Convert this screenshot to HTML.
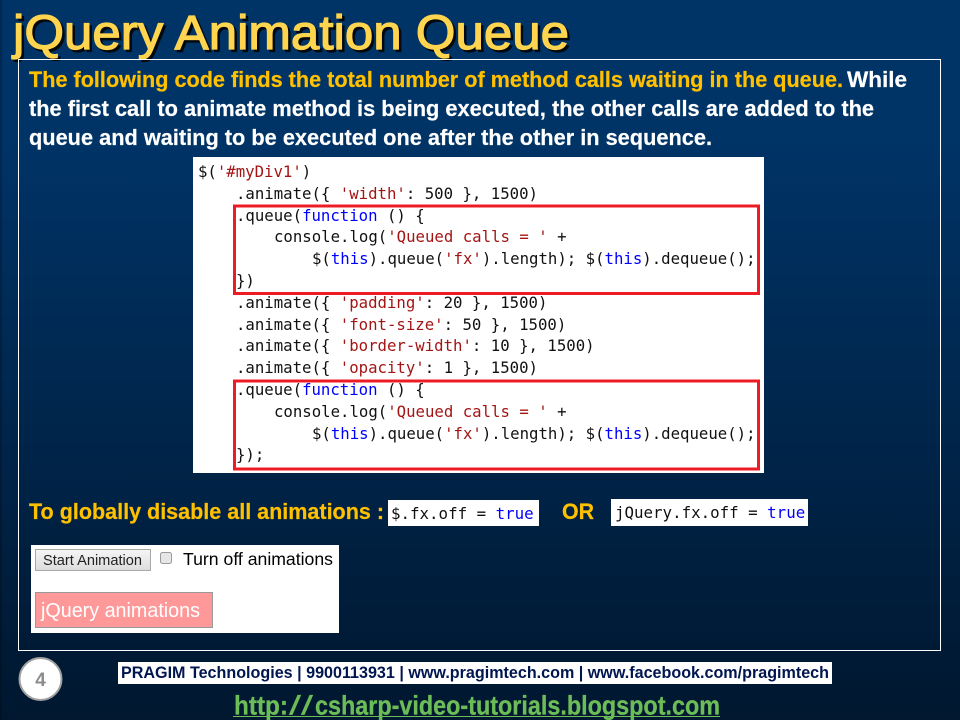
<!DOCTYPE html>
<html>
<head>
<meta charset="utf-8">
<title>jQuery Animation Queue</title>
<style>
html,body{margin:0;padding:0;background:#001a38;}
body{width:960px;height:720px;overflow:hidden;}
svg{display:block;}
.m{font-family:"DejaVu Sans Mono",monospace;font-size:15.68px;fill:#111;}
.m2{font-family:"DejaVu Sans Mono",monospace;font-size:15.8px;fill:#111;}
.s{fill:#a31515;}
.k{fill:#0000ff;}
.b{font-family:"Liberation Sans",sans-serif;font-weight:bold;font-size:22px;fill:#fff;stroke:#fff;stroke-width:.2px;}
.y{fill:#ffc000;stroke:#ffc000;}
</style>
</head>
<body>
<svg xmlns="http://www.w3.org/2000/svg" width="960" height="720" viewBox="0 0 960 720" xml:space="preserve">
<defs>
<linearGradient id="bg" x1="0" y1="0" x2="0" y2="1">
<stop offset="0" stop-color="#003366"/>
<stop offset="0.2" stop-color="#003366"/>
<stop offset="1" stop-color="#00172f"/>
</linearGradient>
<linearGradient id="btn" x1="0" y1="0" x2="0" y2="1">
<stop offset="0" stop-color="#f6f6f6"/>
<stop offset="1" stop-color="#dcdcdc"/>
</linearGradient>
</defs>
<rect width="960" height="720" fill="url(#bg)"/>
<rect x="0" y="0" width="2" height="720" fill="#000" opacity="0.2"/>

<text x="15.5" y="51.5" font-family="Liberation Sans,sans-serif" font-size="48" fill="#050505" stroke="#050505" stroke-width="1.2" opacity="0.9" textLength="556" lengthAdjust="spacingAndGlyphs">jQuery Animation Queue</text>
<text x="13" y="49" font-family="Liberation Sans,sans-serif" font-size="48" fill="#ffd54f" stroke="#ffd54f" stroke-width="1.2" textLength="556" lengthAdjust="spacingAndGlyphs">jQuery Animation Queue</text>

<rect x="18.5" y="59.5" width="922" height="591" fill="none" stroke="#fff" stroke-width="1"/>

<text class="b y" x="29" y="87" textLength="814" lengthAdjust="spacingAndGlyphs">The following code finds the total number of method calls waiting in the queue.</text>
<text class="b" x="847" y="87" textLength="60" lengthAdjust="spacingAndGlyphs">While</text>
<text class="b" x="29" y="116" textLength="845" lengthAdjust="spacingAndGlyphs">the first call to animate method is being executed, the other calls are added to the</text>
<text class="b" x="29" y="145" textLength="683" lengthAdjust="spacingAndGlyphs">queue and waiting to be executed one after the other in sequence.</text>

<rect x="193" y="157" width="571" height="316" fill="#fff"/>
<text class="m" x="198" y="177">$(<tspan class="s">'#myDiv1'</tspan>)</text>
<text class="m" x="236" y="199">.animate({ <tspan class="s">'width'</tspan>: 500 }, 1500)</text>
<text class="m" x="236" y="221">.queue(<tspan class="k">function</tspan> () {</text>
<text class="m" x="274" y="242">console.log(<tspan class="s">'Queued calls = '</tspan> +</text>
<text class="m" x="312" y="264">$(<tspan class="k">this</tspan>).queue(<tspan class="s">'fx'</tspan>).length); $(<tspan class="k">this</tspan>).dequeue();</text>
<text class="m" x="236" y="286">})</text>
<text class="m" x="236" y="308">.animate({ <tspan class="s">'padding'</tspan>: 20 }, 1500)</text>
<text class="m" x="236" y="330">.animate({ <tspan class="s">'font-size'</tspan>: 50 }, 1500)</text>
<text class="m" x="236" y="351">.animate({ <tspan class="s">'border-width'</tspan>: 10 }, 1500)</text>
<text class="m" x="236" y="373">.animate({ <tspan class="s">'opacity'</tspan>: 1 }, 1500)</text>
<text class="m" x="236" y="395">.queue(<tspan class="k">function</tspan> () {</text>
<text class="m" x="274" y="417">console.log(<tspan class="s">'Queued calls = '</tspan> +</text>
<text class="m" x="312" y="439">$(<tspan class="k">this</tspan>).queue(<tspan class="s">'fx'</tspan>).length); $(<tspan class="k">this</tspan>).dequeue();</text>
<text class="m" x="236" y="460">});</text>

<rect x="234.5" y="206" width="524" height="87.5" fill="none" stroke="#ed1c24" stroke-width="3"/>
<rect x="234.5" y="381" width="524" height="88" fill="none" stroke="#ed1c24" stroke-width="3"/>

<text class="b y" x="29" y="519" textLength="355" lengthAdjust="spacingAndGlyphs">To globally disable all animations :</text>
<rect x="388" y="500" width="151" height="26" fill="#fff"/>
<text class="m2" x="391" y="519">$.fx.off = <tspan class="k">true</tspan></text>
<text class="b y" x="562" y="519" textLength="32" lengthAdjust="spacingAndGlyphs">OR</text>
<rect x="611" y="499" width="197" height="27" fill="#fff"/>
<text class="m2" x="615" y="518">jQuery.fx.off = <tspan class="k">true</tspan></text>

<rect x="31" y="545" width="308" height="88" fill="#fff"/>
<rect x="35.5" y="549.5" width="115" height="21" fill="url(#btn)" stroke="#a8a8a8" stroke-width="1"/>
<text x="43" y="565" font-family="Liberation Sans,sans-serif" font-size="14.5" fill="#222" textLength="99" lengthAdjust="spacingAndGlyphs">Start Animation</text>
<rect x="160.5" y="552.5" width="11" height="11" rx="2" fill="#e6e6e6" stroke="#9a9a9a" stroke-width="1"/>
<text x="183" y="565" font-family="Liberation Sans,sans-serif" font-size="17.5" fill="#000" textLength="150" lengthAdjust="spacingAndGlyphs">Turn off animations</text>
<rect x="35.5" y="592.5" width="177" height="35" fill="#ff9999" stroke="#999" stroke-width="1"/>
<text x="41" y="617" font-family="Liberation Sans,sans-serif" font-size="20" fill="#fff" textLength="159" lengthAdjust="spacingAndGlyphs">jQuery animations</text>

<circle cx="40.5" cy="679" r="21" fill="#fff" stroke="#a0a0a0" stroke-width="2"/>
<text x="40.5" y="686" text-anchor="middle" font-family="Liberation Sans,sans-serif" font-weight="bold" font-size="19" fill="#8c8c8c">4</text>

<rect x="118" y="662" width="714" height="22" fill="#fff"/>
<text x="121" y="678" font-family="Liberation Sans,sans-serif" font-weight="bold" font-size="16.5" fill="#00164f" textLength="708" lengthAdjust="spacingAndGlyphs">PRAGIM Technologies | 9900113931 | www.pragimtech.com | www.facebook.com/pragimtech</text>

<text x="234" y="714.5" font-family="Liberation Sans,sans-serif" font-weight="bold" font-size="27" fill="#6cbd58" stroke="#6cbd58" stroke-width="0.3" textLength="54" lengthAdjust="spacingAndGlyphs">http:</text>
<text x="289" y="714.5" font-family="Liberation Sans,sans-serif" font-size="27" fill="#6cbd58" stroke="#6cbd58" stroke-width="0.2" textLength="24" lengthAdjust="spacingAndGlyphs">//</text>
<text x="315" y="714.5" font-family="Liberation Sans,sans-serif" font-weight="bold" font-size="27" fill="#6cbd58" stroke="#6cbd58" stroke-width="0.3" textLength="405" lengthAdjust="spacingAndGlyphs">csharp-video-tutorials.blogspot.com</text>
<rect x="233" y="716" width="487" height="1" fill="#6cbd58"/>
</svg>
</body>
</html>
